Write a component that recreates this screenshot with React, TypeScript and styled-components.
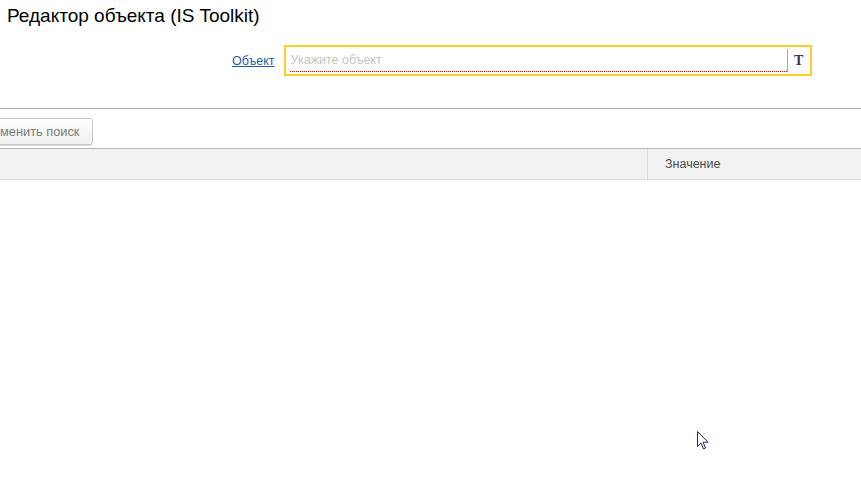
import React from 'react';
import styled, { createGlobalStyle } from 'styled-components';

const GlobalStyle = createGlobalStyle`
  html, body {
    margin: 0;
    padding: 0;
    background: #fff;
    overflow: hidden;
  }
  body {
    font-family: 'Liberation Sans', Arial, sans-serif;
  }
`;

const Page = styled.div`
  position: relative;
  width: 861px;
  height: 493px;
  overflow: hidden;
  background: #fff;
`;

const Title = styled.h1`
  margin: 0;
  padding: 5px 0 0 7px;
  height: 25px;
  font-size: 19px;
  font-weight: normal;
  color: #000;
  line-height: 22px;
`;

const FieldRow = styled.div`
  display: flex;
  align-items: center;
  padding: 15px 0 0 232px;
  height: 31px;
`;

const FieldLabel = styled.a`
  font-size: 12.5px;
  color: #1c5fa8;
  text-decoration: underline;
  margin-right: 9px;
  cursor: pointer;
`;

const InputBox = styled.div`
  box-sizing: border-box;
  width: 528px;
  height: 31px;
  border: 2px solid #fcce2a;
  display: flex;
  align-items: center;
  padding: 2px 0 2px 4px;
`;

const InputText = styled.div`
  flex: 1;
  height: 22px;
  box-sizing: border-box;
  font-size: 12.5px;
  color: #c2c7c2;
  line-height: 20px;
  padding-left: 1px;
  background-image: repeating-linear-gradient(
    to right,
    #e00000 0,
    #e00000 1px,
    transparent 1px,
    transparent 2px
  );
  background-size: 100% 1px;
  background-repeat: no-repeat;
  background-position: left bottom;
`;

const ChoiceButton = styled.div`
  width: 22px;
  height: 23px;
  border-left: 1px solid #a8a8a8;
  display: flex;
  align-items: center;
  justify-content: center;
  font-family: 'Liberation Serif', 'Times New Roman', serif;
  font-weight: bold;
  font-size: 14px;
  color: #3d2f4f;
`;

const Divider = styled.div`
  margin-top: 32px;
  height: 1px;
  background: #b5b5b5;
`;

const Toolbar = styled.div`
  display: flex;
  padding-top: 9px;
  height: 27px;
  margin-left: -26px;
`;

const ToolButton = styled.button`
  box-sizing: border-box;
  height: 27px;
  padding: 0 13px 0 10px;
  border: 1px solid #c8c8c8;
  border-radius: 3px;
  background: linear-gradient(#ffffff, #f0f0f0);
  box-shadow: 0 1px 1px rgba(0, 0, 0, 0.15);
  font-family: 'Liberation Sans', Arial, sans-serif;
  font-size: 12.8px;
  color: #7a7a7a;
`;

const Table = styled.div`
  margin-top: 3px;
`;

const HeaderRow = styled.div`
  display: grid;
  grid-template-columns: 647px 1fr;
  height: 30px;
  border-top: 1px solid #b5b5b5;
  border-bottom: 1px solid #dcdcdc;
  background: #f2f2f2;
`;

const HeaderCell = styled.div<{ $divider?: boolean }>`
  display: flex;
  align-items: center;
  padding-left: 17px;
  font-size: 12.5px;
  color: #4d4d4d;
  border-left: ${p => (p.$divider ? '1px solid #d8d8d8' : 'none')};
`;

const Cursor = styled.svg`
  position: absolute;
  left: 697px;
  top: 431px;
`;

export default function App() {
  return (
    <Page>
      <GlobalStyle />
      <Title>Редактор объекта (IS Toolkit)</Title>
      <FieldRow>
        <FieldLabel>Объект</FieldLabel>
        <InputBox>
          <InputText>Укажите объект</InputText>
          <ChoiceButton>T</ChoiceButton>
        </InputBox>
      </FieldRow>
      <Divider />
      <Toolbar>
        <ToolButton>Изменить поиск</ToolButton>
      </Toolbar>
      <Table>
        <HeaderRow>
          <HeaderCell />
          <HeaderCell $divider>Значение</HeaderCell>
        </HeaderRow>
      </Table>
      <Cursor width="13" height="20" viewBox="0 0 13 20">
        <path
          d="M0.5 0.5 L0.5 15.5 L4 12 L6.5 18 L8.5 17 L6 11.2 L11 11.2 Z"
          fill="#fff"
          stroke="#1a2a6c"
          strokeWidth="1"
        />
      </Cursor>
    </Page>
  );
}
